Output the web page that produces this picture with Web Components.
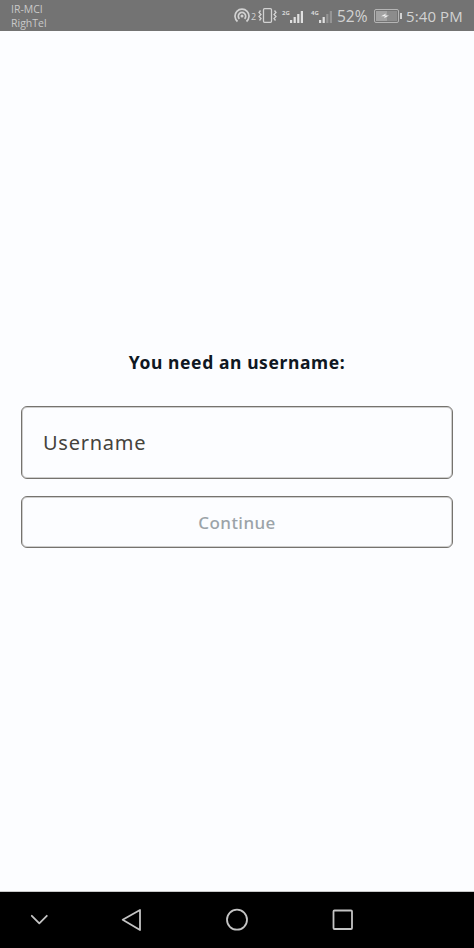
<!DOCTYPE html>
<html>
<head>
<meta charset="utf-8">
<style>
    html, body { margin: 0; height: 100%; background: #fcfdff; }
    body { display: flex; flex-direction: column; height: 948px; overflow: hidden; font-family: "Noto Sans", sans-serif; }
</style>
</head>
<body>
<status-bar></status-bar>
<signup-form heading="You need an username:" placeholder="Username" action="Continue"></signup-form>
<nav-bar></nav-bar>

<script>
class StatusBar extends HTMLElement {
    constructor () {
        super()
        this.root = this.attachShadow({mode: "open"})
    }

    connectedCallback () {
        this.root.innerHTML =
        `
        <style>
            :host {
                display: flex;
                justify-content: space-between;
                align-items: center;
                flex: none;
                height: 31px;
                background: #737373;
                color: #d2d2d2;
                font-family: "Open Sans", sans-serif;
            }
            .carriers {
                display: flex;
                flex-direction: column;
                padding-left: 11px;
                font-size: 10.5px;
                line-height: 14px;
                color: #c9c9c9;
            }
            .icons {
                display: flex;
                align-items: center;
                padding-right: 10px;
            }
            svg { display: block; fill: none; stroke: #d2d2d2; }
            .sup { width: 7px; font-size: 9px; line-height: 9px; align-self: flex-start; margin-top: 7px; text-align: center; }
            .pct { width: 32px; font-size: 15.500px; margin: 0 5px; white-space: nowrap; }
            .time { width: 58px; font-size: 15px; margin-left: 4px; white-space: nowrap; letter-spacing: .1px; }
        </style>
        <div class="carriers"><span>IR-MCI</span><span>RighTel</span></div>
        <div class="icons">
            <svg width="16" height="15" viewBox="0 0 16 15" stroke-width="1.700">
                <path d="M3.500 13.500A7 7 0 1 1 12.500 13.500"/>
                <path d="M5.400 10.800A3.700 3.700 0 1 1 10.600 10.800"/>
                <circle cx="8" cy="8" r="1.500" fill="#d2d2d2" stroke="none"/>
            </svg>
            <span class="sup">2</span>
            <svg width="19" height="15" viewBox="0 0 19 15" stroke-width="1.300" style="margin-left:1px">
                <rect x="5.500" y=".7" width="8" height="13.600" rx="1"/>
                <path d="M2.500 2.500l-1.500 2 2 2-2 2 2 2-1.500 2"/>
                <path d="M16.500 2.500l1.500 2-2 2 2 2-2 2 1.500 2"/>
            </svg>
            <signal-bars label="2G" level="4" style="margin-left:5px"></signal-bars>
            <signal-bars label="4G" level="2" style="margin-left:8px"></signal-bars>
            <span class="pct">52%</span>
            <svg width="28" height="14" viewBox="0 0 28 14" stroke-width="1">
                <rect x=".5" y=".5" width="24" height="13" rx="1.500" stroke="#b5b5b5"/>
                <rect x="2" y="2" width="21" height="10" fill="#8c8c8c" stroke="none"/>
                <rect x="2" y="2" width="11" height="10" fill="#a3a3a3" stroke="none"/>
                <path d="M7 7.200l5-2.700-1 2h4l-5 2.800 1-2.100z" fill="#f0f0f0" stroke="none"/>
                <rect x="26" y="4" width="2" height="6" fill="#d2d2d2" stroke="none"/>
            </svg>
            <span class="time">5:40 PM</span>
        </div>
        `
    }
}

class SignalBars extends HTMLElement {
    constructor () {
        super()
        this.root = this.attachShadow({mode: "open"})
    }

    connectedCallback () {
        const level = Number(this.getAttribute("level"))
        const bars = [3, 6, 9, 12].map((h, i) => {
            const fill = i < level ? "#e0e0e0" : "#959595"
            return `<rect x="${i * 3.6}" y="${13 - h}" width="2.200" height="${h}" fill="${fill}"/>`
        }).join("")
        this.root.innerHTML =
        `
        <style>
            :host { display: flex; height: 14px; width: 21px; margin-top: 3px; }
            span { width: 8px; font: 700 6px/6px "Open Sans", sans-serif; color: #d8d8d8; white-space: nowrap; }
            svg { display: block; }
        </style>
        <span>${this.getAttribute("label")}</span>
        <svg width="13" height="13" viewBox="0 0 13 13">${bars}</svg>
        `
    }
}

class SignupForm extends HTMLElement {
    constructor () {
        super()
        this.root = this.attachShadow({mode: "open"})
    }

    connectedCallback () {
        this.root.innerHTML =
        `
        <style>
            :host {
                display: flex;
                flex-direction: column;
                flex: 1;
                padding: 320px 21px 0;
                font-family: "Noto Sans", sans-serif;
            }
            h1 {
                margin: 0 0 32px;
                text-align: center;
                font-size: 17.500px;
                line-height: 23px;
                font-weight: 700;
                color: #0f1722;
                letter-spacing: .6px;
            }
            .field, .action {
                box-sizing: border-box;
                border: 1px solid #75736e;
                box-shadow: inset 0 0 0 1px rgba(120, 118, 112, .35);
                border-radius: 6px;
                display: flex;
                align-items: center;
            }
            .field {
                height: 73px;
                padding-left: 21px;
                margin-bottom: 17px;
                font-size: 20px;
                letter-spacing: .75px;
                color: #45423c;
            }
            .action {
                height: 52px;
                justify-content: center;
                font-size: 17px;
                font-weight: 500;
                letter-spacing: .45px;
                color: #9ba3a8;
            }
        </style>
        <h1>${this.getAttribute("heading")}</h1>
        <div class="field">${this.getAttribute("placeholder")}</div>
        <div class="action">${this.getAttribute("action")}</div>
        `
    }
}

class NavBar extends HTMLElement {
    constructor () {
        super()
        this.root = this.attachShadow({mode: "open"})
    }

    connectedCallback () {
        this.root.innerHTML =
        `
        <style>
            :host {
                display: block;
                flex: none;
                height: 57px;
                background: #000;
                border-top: 1px solid #c9c9c9;
                box-sizing: border-box;
            }
            svg { display: block; fill: none; stroke: #c4c4c4; stroke-width: 1.800; stroke-linejoin: round; stroke-linecap: round; }
        </style>
        <svg width="474" height="56" viewBox="0 892 474 56">
            <path d="M31.800 915.800l7.500 7.500 7.500-7.500"/>
            <path d="M140 910v20l-17.300-10.300z"/>
            <circle cx="237" cy="919.700" r="10"/>
            <rect x="333.500" y="910.500" width="18.500" height="18.500" rx="1"/>
        </svg>
        `
    }
}

customElements.define("signal-bars", SignalBars)
customElements.define("status-bar", StatusBar)
customElements.define("signup-form", SignupForm)
customElements.define("nav-bar", NavBar)
</script>
</body>
</html>
